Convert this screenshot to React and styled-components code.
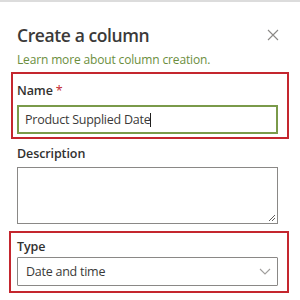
import React from "react";
import styled, { createGlobalStyle } from "styled-components";

const Global = createGlobalStyle`
  html, body { margin: 0; padding: 0; background: #ffffff; }
  body { font-family: "Open Sans", "Noto Sans", sans-serif; color: #323130; }
  * { box-sizing: border-box; }
`;

const Page = styled.div`
  width: 300px;
  height: 300px;
  overflow: hidden;
  background: #fff;
  border-top: 2px solid #dcdcdc;
`;

const Panel = styled.div`
  padding: 0 22px 0 17px;
  display: flex;
  flex-direction: column;
`;

const Header = styled.div`
  display: flex;
  align-items: center;
  justify-content: space-between;
  margin-top: 20px;
  height: 26px;
`;

const Title = styled.h1`
  margin: 0;
  font-size: 17.5px;
  font-weight: 600;
  letter-spacing: -0.4px;
  color: #3b3a39;
  line-height: 26px;
`;

const CloseButton = styled.button`
  border: 0;
  background: none;
  padding: 0;
  width: 12px;
  height: 12px;
  margin-right: -1px;
  display: flex;
  color: #8a8886;
`;

const LearnLink = styled.a`
  margin-top: 3px;
  font-size: 12px;
  line-height: 18px;
  color: #6b8e3d;
  text-decoration: none;
  letter-spacing: -0.15px;
`;

const Highlight = styled.div`
  border: 2px solid ${(p) => p.color || "#c4262e"};
  margin: ${(p) => p.mt || 0}px -11px 0 ${(p) => p.ml || -6}px;
  padding: ${(p) => p.pt || 8}px 9px ${(p) => p.pb || 5}px ${(p) => -(p.ml || -6) - 2}px;
  display: flex;
  flex-direction: column;
`;

const Field = styled.div`
  display: flex;
  flex-direction: column;
  margin-top: ${(p) => p.mt || 0}px;
`;

const Label = styled.label`
  font-size: 12.5px;
  font-weight: 600;
  line-height: 18px;
  color: #323130;
  letter-spacing: -0.1px;
  margin-bottom: ${(p) => p.mb || 0}px;
`;

const Required = styled.span`
  color: #c4262e;
  margin-left: 3px;
  font-weight: 400;
`;

const TextBox = styled.div`
  height: 29px;
  border: 2px solid #7a9a4a;
  display: flex;
  align-items: center;
  padding: 0 6px;
  font-size: 12.5px;
  color: #3b3a39;
  letter-spacing: -0.25px;
`;

const Caret = styled.span`
  display: inline-block;
  width: 1px;
  height: 14px;
  background: #201f1e;
`;

const TextArea = styled.div`
  position: relative;
  height: 57px;
  border: 1px solid #8a8886;
`;

const Grip = styled.svg`
  position: absolute;
  right: 1px;
  bottom: 1px;
`;

const Select = styled.div`
  height: 29px;
  border: 1px solid #8a8886;
  border-radius: 1px;
  display: flex;
  align-items: center;
  justify-content: space-between;
  padding: 0 6px 0 8px;
  font-size: 12.5px;
  color: #3b3a39;
  letter-spacing: -0.25px;
`;

export default function App() {
  return (
    <>
      <Global />
      <Page>
        <Panel>
          <Header>
            <Title>Create a column</Title>
            <CloseButton aria-label="Close">
              <svg width="12" height="12" viewBox="0 0 12 12">
                <path d="M1 1 L11 11 M11 1 L1 11" stroke="#8a8886" strokeWidth="1.1" fill="none" />
              </svg>
            </CloseButton>
          </Header>
          <LearnLink href="#">Learn more about column creation.</LearnLink>

          <Highlight mt={3} pt={8} pb={3}>
            <Field>
              <Label mb={5}>
                Name<Required>*</Required>
              </Label>
              <TextBox>
                Product Supplied Date<Caret />
              </TextBox>
            </Field>
          </Highlight>

          <Field mt={6}>
            <Label mb={4}>Description</Label>
            <TextArea>
              <Grip width="9" height="9" viewBox="0 0 9 9">
                <path d="M8 2 L2 8 M8 5 L5 8" stroke="#605e5c" strokeWidth="1" />
              </Grip>
            </TextArea>
          </Field>

          <Highlight mt={7} ml={-8} pt={5} pb={5}>
            <Field>
              <Label mb={1}>Type</Label>
              <Select>
                Date and time
                <svg width="12" height="7" viewBox="0 0 12 7">
                  <path d="M1 1 L6 6 L11 1" stroke="#a19f9d" strokeWidth="1.1" fill="none" />
                </svg>
              </Select>
            </Field>
          </Highlight>
        </Panel>
      </Page>
    </>
  );
}
